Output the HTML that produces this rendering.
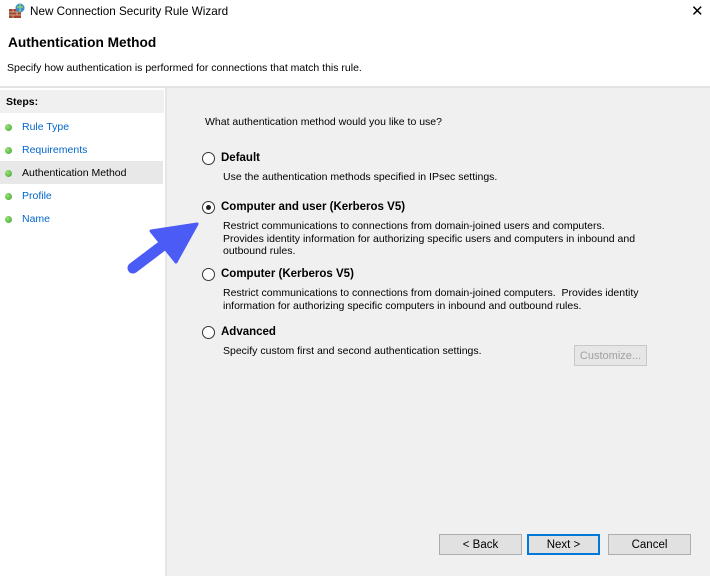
<!DOCTYPE html>
<html><head><style>
*{margin:0;padding:0;box-sizing:border-box}
body{width:710px;height:576px;background:#fff;font-family:"Liberation Sans",sans-serif;font-size:10.5px;color:#000;position:relative;overflow:hidden}
.a{position:absolute;white-space:nowrap}
.lnk{color:#0066cc}
.dot{position:absolute;width:7px;height:7px;border-radius:50%;background:radial-gradient(circle at 35% 35%,#9be07a,#3aa528)}
.rad{position:absolute;width:13px;height:13px;border:1px solid #333;border-radius:50%;background:#fff}
.rad.on::after{content:"";position:absolute;left:3px;top:3px;width:5px;height:5px;border-radius:50%;background:#222}
.b{font-weight:bold;font-size:11.5px}
.btn{position:absolute;height:21px;border:1px solid #adadad;background:#e1e1e1;text-align:center;line-height:21px;font-size:11.5px}
</style></head><body>
<svg class="a" style="left:8px;top:3px" width="18" height="16"><rect x="1" y="6" width="12" height="9" fill="#a0442c"/><path d="M1 9h12M1 12h12M5 6v3M9 9v3M5 12v3" stroke="#e8c0a8" stroke-width="0.8"/><circle cx="12" cy="5" r="4.5" fill="#3b8fd6"/><path d="M9 4h6M12 1v8" stroke="#8cd06a" stroke-width="1.5"/></svg>
<div class="a" style="left:30px;top:5px;font-size:11.7px">New Connection Security Rule Wizard</div>
<div class="a" style="left:691px;top:2px;font-size:15px">✕</div>
<div class="a" style="left:8px;top:35px;font-size:13.7px;font-weight:bold">Authentication Method</div>
<div class="a" style="left:7px;top:62px">Specify how authentication is performed for connections that match this rule.</div>
<div class="a" style="left:0;top:86px;width:710px;height:2px;background:#e3e3e3"></div>
<div class="a" style="left:0;top:90px;width:164px;height:23px;background:#f0f0f0"></div>
<div class="a" style="left:6px;top:96px;font-weight:bold">Steps:</div>
<div class="a" style="left:165px;top:88px;width:2px;height:488px;background:#e6e6e6"></div>
<div class="a" style="left:0;top:161px;width:163px;height:23px;background:#e8e8e8"></div>
<div class="dot" style="left:5px;top:124px"></div><div class="a lnk" style="left:22px;top:121px">Rule Type</div>
<div class="dot" style="left:5px;top:147px"></div><div class="a lnk" style="left:22px;top:144px">Requirements</div>
<div class="dot" style="left:5px;top:170px"></div><div class="a" style="left:22px;top:167px">Authentication Method</div>
<div class="dot" style="left:5px;top:193px"></div><div class="a lnk" style="left:22px;top:190px">Profile</div>
<div class="dot" style="left:5px;top:216px"></div><div class="a lnk" style="left:22px;top:213px">Name</div>
<div class="a" style="left:167px;top:88px;width:543px;height:488px;background:#f0f0f0"></div>
<div class="a" style="left:205px;top:116px">What authentication method would you like to use?</div>
<div class="rad" style="left:202px;top:152px"></div><div class="a b" style="left:221px;top:152px">Default</div>
<div class="a" style="left:223px;top:171px">Use the authentication methods specified in IPsec settings.</div>
<div class="rad on" style="left:202px;top:201px"></div><div class="a b" style="left:221px;top:201px">Computer and user (Kerberos V5)</div>
<div class="a" style="left:223px;top:220px;line-height:12.5px">Restrict communications to connections from domain-joined users and computers.<br>Provides identity information for authorizing specific users and computers in inbound and<br>outbound rules.</div>
<div class="rad" style="left:202px;top:268px"></div><div class="a b" style="left:221px;top:268px">Computer (Kerberos V5)</div>
<div class="a" style="left:223px;top:287px;line-height:12.5px">Restrict communications to connections from domain-joined computers.&nbsp; Provides identity<br>information for authorizing specific computers in inbound and outbound rules.</div>
<div class="rad" style="left:202px;top:326px"></div><div class="a b" style="left:221px;top:326px">Advanced</div>
<div class="a" style="left:223px;top:345px">Specify custom first and second authentication settings.</div>
<div class="btn" style="left:574px;top:345px;width:73px;color:#a0a0a0;border-color:#c8c8c8;background:#e6e6e6;font-size:11px;line-height:20px">Customize...</div>
<div class="btn" style="left:439px;top:534px;width:83px">&lt; Back</div>
<div class="btn" style="left:527px;top:534px;width:73px;border:2px solid #0078d7;line-height:19px">Next &gt;</div>
<div class="btn" style="left:608px;top:534px;width:83px">Cancel</div>
<svg class="a" style="left:0;top:0" width="710" height="576"><path d="M133 268L170 240" stroke="#4a5cf5" stroke-width="11" stroke-linecap="round"/><path d="M197 224L151 231L176 262Z" fill="#4a5cf5" stroke="#4a5cf5" stroke-width="3" stroke-linejoin="round"/></svg>
</body></html>
